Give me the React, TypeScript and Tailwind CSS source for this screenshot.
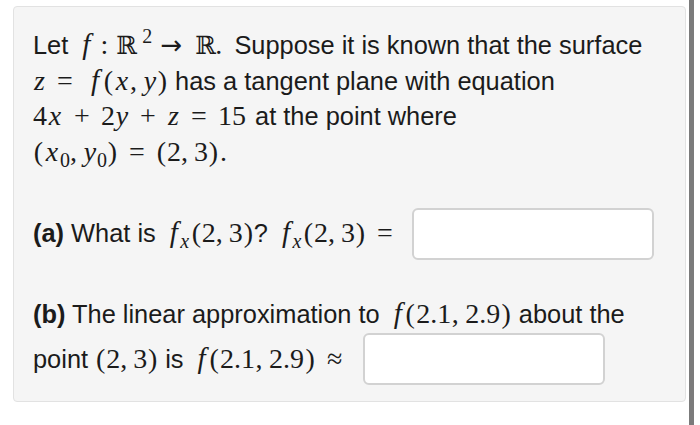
import React from 'react'

type P = { children: React.ReactNode; w: string; i?: boolean }

// one math glyph in a box as wide as the TeX glyph it stands for
const T = ({ children, w, i }: P) => (
  <span
    className={
      "inline-block text-center leading-none font-['Liberation_Serif',serif] text-[28px] " +
      w +
      (i ? ' italic' : '')
    }
  >
    {children}
  </span>
)

const F = ({ w }: { w: string }) => (
  <span
    className={
      "inline-block text-left ml-[5px] pl-[2px] leading-none font-['Liberation_Serif',serif] italic text-[29px] " + w
    }
  >
    f
  </span>
)

const Sm = ({ children, w, i, down }: P & { down?: boolean }) => (
  <span
    className={
      "inline-block text-center leading-none font-['Liberation_Serif',serif] text-[20px] relative " +
      w +
      (i ? ' italic' : '') +
      (down ? ' top-[6px]' : ' -top-[11px]')
    }
  >
    {children}
  </span>
)

const Rel = ({ children }: { children: React.ReactNode }) => (
  <span className="inline-block w-[22px] mx-[8px] text-center leading-none font-['Liberation_Serif',serif] text-[28px]">
    {children}
  </span>
)

const RR = () => (
  <span className="inline-block w-[20px] text-center leading-none font-['DejaVu_Serif',serif] text-[25px]">ℝ</span>
)

const L = () => <T w="w-[11px]">(</T>
const R = () => <T w="w-[11px]">)</T>
const C = () => <T w="w-[13px] text-left">,</T>

const Pair = ({ a, b }: { a: string; b: string }) => (
  <>
    <L />
    <T w={a.length > 1 ? 'w-[36px]' : 'w-[14px]'}>{a}</T>
    <C />
    <T w={b.length > 1 ? 'w-[36px]' : 'w-[14px]'}>{b}</T>
    <R />
  </>
)

const AnswerBox = ({ className }: { className: string }) => (
  <div className={'h-[52px] w-[242px] bg-white border-2 border-[#d2d2d2] rounded-[6px] shrink-0 ' + className} />
)

export default function App() {
  return (
    <div className="w-[700px] h-[425px] bg-white flex font-['Liberation_Sans',Arial,sans-serif] text-[#1b1b1b]">
      <div className="ml-[13px] mt-[6px] w-[673px] h-[396px] bg-[#f5f5f5] border border-[#e2e2e2] rounded-[4px] pl-[19px] pt-[21px] text-[25.4px] whitespace-nowrap">
        <div className="leading-[35.5px]">
          <div>
            Let <F w="w-[12px]" />
            <span className="inline-block w-[8px] mx-[8px] text-center leading-none font-['Liberation_Serif',serif] text-[28px]">
              :
            </span>
            <RR />
            <Sm w="w-[10px] ml-[6px]">2</Sm>
            <span className="inline-block w-[24px] ml-[7px] mr-[12px] text-center leading-none font-['DejaVu_Sans',sans-serif] text-[26px]">
              →
            </span>
            <RR />
            <T w="w-[12px] text-left">.</T> Suppose it is known that the surface
          </div>
          <div>
            <T w="w-[13px]" i>z</T>
            <Rel>=</Rel>
            <F w="w-[14px]" />
            <L />
            <T w="w-[16px]" i>x</T>
            <C />
            <T w="w-[14px]" i>y</T>
            <R /> has a tangent plane with equation
          </div>
          <div>
            <T w="w-[14px]">4</T>
            <T w="w-[16px]" i>x</T>
            <Rel>+</Rel>
            <T w="w-[14px]">2</T>
            <T w="w-[14px]" i>y</T>
            <Rel>+</Rel>
            <T w="w-[13px]" i>z</T>
            <Rel>=</Rel>
            <T w="w-[30px] text-left">15</T> at the point where
          </div>
          <div>
            <L />
            <T w="w-[16px]" i>x</T>
            <Sm w="w-[10px]" down>0</Sm>
            <C />
            <T w="w-[14px]" i>y</T>
            <Sm w="w-[10px]" down>0</Sm>
            <R />
            <Rel>=</Rel>
            <Pair a="2" b="3" />
            <T w="w-[9px]">.</T>
          </div>
        </div>

        <div className="mt-[38px] h-[51px] flex items-center">
          <span className="leading-[35.5px] pt-[1px]">
            <b>(a)</b> What is <F w="w-[11px]" />
            <Sm w="w-[12px]" i down>x</Sm>
            <Pair a="2" b="3" />? <F w="w-[11px]" />
            <Sm w="w-[12px]" i down>x</Sm>
            <Pair a="2" b="3" />
            <Rel>=</Rel>
          </span>
          <AnswerBox className="ml-[8px]" />
        </div>

        <div className="mt-[38px] leading-[35.5px]">
          <b>(b)</b> The linear approximation to <F w="w-[13px]" />
          <Pair a="2.1" b="2.9" /> about the
        </div>
        <div className="h-[52px] flex items-center">
          <span className="leading-[35.5px] pt-[2px]">
            point <Pair a="2" b="3" /> is <F w="w-[13px]" />
            <Pair a="2.1" b="2.9" />
            <Rel>≈</Rel>
          </span>
          <AnswerBox className="ml-[9px]" />
        </div>
      </div>
      <div className="ml-[3px] w-[5px] h-full bg-[#7b7b7b]" />
    </div>
  )
}
